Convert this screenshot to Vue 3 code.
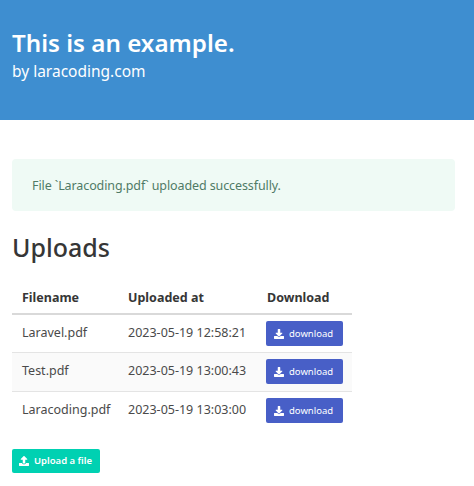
<template>
  <div class="page">
    <section class="hero">
      <h1 class="hero-title">This is an example.</h1>
      <p class="hero-sub">by laracoding.com</p>
    </section>

    <main class="content">
      <div class="notification">File `Laracoding.pdf` uploaded successfully.</div>

      <h2 class="heading">Uploads</h2>

      <table class="table">
        <thead>
          <tr>
            <th>Filename</th>
            <th>Uploaded at</th>
            <th>Download</th>
          </tr>
        </thead>
        <tbody>
          <tr v-for="file in files" :key="file.name">
            <td class="text-cell">{{ file.name }}</td>
            <td class="text-cell">{{ file.uploadedAt }}</td>
            <td>
              <button class="btn btn-download">
                <svg class="icon" viewBox="0 0 512 512" aria-hidden="true">
                  <path d="M216 0h80c13 0 24 11 24 24v168h88c18 0 27 21 14 34L270 378c-8 8-20 8-28 0L90 226c-13-13-4-34 14-34h88V24c0-13 11-24 24-24z" />
                  <path d="M512 376v112c0 13-11 24-24 24H24c-13 0-24-11-24-24V376c0-13 11-24 24-24h147l49 49c20 20 52 20 72 0l49-49h147c13 0 24 11 24 24z" />
                </svg>
                <span>download</span>
              </button>
            </td>
          </tr>
        </tbody>
      </table>

      <button class="btn btn-upload">
        <svg class="icon" viewBox="0 0 512 512" aria-hidden="true">
          <path d="M296 384h-80c-13 0-24-11-24-24V192h-88c-18 0-27-21-14-34L242 6c8-8 20-8 28 0l152 152c13 13 4 34-14 34h-88v168c0 13-11 24-24 24z" />
          <path d="M512 376v112c0 13-11 24-24 24H24c-13 0-24-11-24-24V376c0-13 11-24 24-24h136v8c0 31 25 56 56 56h80c31 0 56-25 56-56v-8h136c13 0 24 11 24 24z" />
        </svg>
        <span>Upload a file</span>
      </button>
    </main>
  </div>
</template>

<script setup>
const files = [
  { name: 'Laravel.pdf', uploadedAt: '2023-05-19 12:58:21' },
  { name: 'Test.pdf', uploadedAt: '2023-05-19 13:00:43' },
  { name: 'Laracoding.pdf', uploadedAt: '2023-05-19 13:03:00' }
]
</script>

<style>
html,
body {
  margin: 0;
  background: #ffffff;
}
</style>

<style scoped>
.page {
  font-family: "Noto Sans", "Open Sans", sans-serif;
  color: #4a4a4a;
  font-size: 12.5px;
}

.hero {
  height: 120px;
  box-sizing: border-box;
  padding: 26px 12px 0;
  background: #3e8ed0;
  color: #ffffff;
}

.hero-title {
  margin: 0;
  font-size: 24.2px;
  line-height: 33px;
  font-weight: 600;
}

.hero-sub {
  margin: 0;
  font-size: 15.5px;
  line-height: 24px;
}

.content {
  padding: 39px 19px 0 12px;
}

.notification {
  height: 52px;
  box-sizing: border-box;
  padding: 0 20px;
  display: flex;
  align-items: center;
  background: #effaf5;
  border-radius: 4px;
  color: #4f7a66;
  font-size: 12.5px;
  letter-spacing: -0.1px;
}

.heading {
  margin: 16px 0 0;
  font-size: 25px;
  line-height: 40px;
  font-weight: 500;
  color: #363636;
}

.table {
  margin-top: 14px;
  width: 340px;
  border-collapse: collapse;
  table-layout: fixed;
}

.table th:nth-child(1) { width: 106px; }
.table th:nth-child(2) { width: 139px; }

.table th,
.table td {
  box-sizing: border-box;
  padding: 0 0 0 10px;
  text-align: left;
}

.table th {
  height: 33px;
  border-bottom: 2px solid #d9d9d9;
  color: #363636;
  font-size: 12.5px;
  font-weight: 700;
}

.table td {
  height: 38.5px;
  border-bottom: 1px solid #e4e4e4;
  font-size: 12.5px;
}

.table .text-cell {
  padding-bottom: 3px;
}

.table tbody tr:nth-child(even) {
  background: #fafafa;
}

.table tbody tr:last-child td {
  border-bottom: none;
}

.btn {
  display: flex;
  align-items: center;
  height: 25px;
  box-sizing: border-box;
  border: none;
  border-radius: 2px;
  font-family: inherit;
  color: #ffffff;
  font-size: 9.5px;
  cursor: pointer;
}

.btn-download {
  width: 77px;
  margin-left: -1px;
  padding: 0 0 0 8px;
  gap: 5px;
  background: #485fc7;
}

.btn-upload {
  width: 88px;
  height: 24px;
  margin-top: 19px;
  padding: 0 0 0 7px;
  gap: 5px;
  background: #00d1b2;
  font-weight: 600;
}

.icon {
  width: 10px;
  height: 10px;
  fill: currentColor;
}
</style>
